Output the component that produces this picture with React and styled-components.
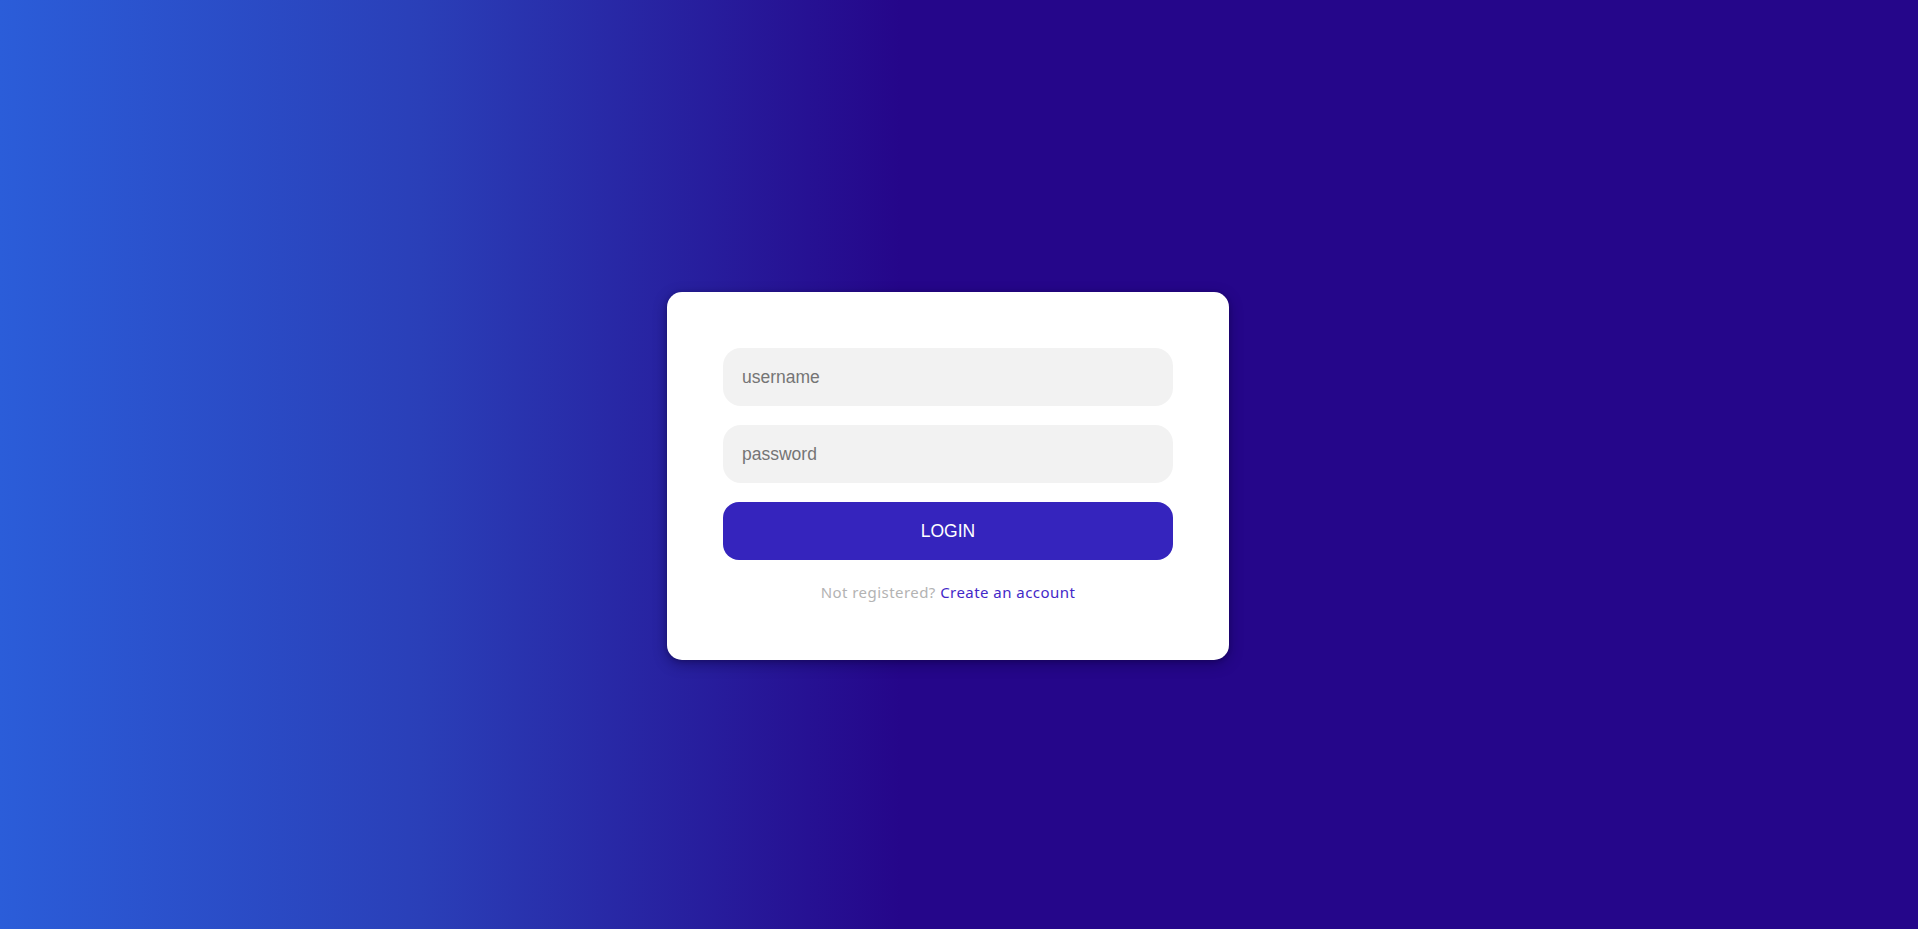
import React from "react";
import styled, { createGlobalStyle } from "styled-components";

const GlobalStyle = createGlobalStyle`
  html, body {
    margin: 0;
    padding: 0;
    height: 100%;
  }
  body {
    font-family: "Liberation Sans", Arial, sans-serif;
    background: linear-gradient(to right, #2b5dd9 0%, #2a3fb8 22%, #25068a 47%, #25068a 100%);
    min-height: 929px;
  }
  #root {
    min-height: 100%;
  }
`;

const Page = styled.main`
  display: flex;
  justify-content: center;
  align-items: flex-start;
  padding: 292px 22px 0 0;
  min-height: 929px;
  box-sizing: border-box;
`;

const Card = styled.form`
  width: 450px;
  padding: 56px 56px 56px;
  background: #ffffff;
  border-radius: 15px;
  box-shadow: 0 4px 14px rgba(10, 0, 60, 0.45), 0 1px 4px rgba(0, 0, 0, 0.2);
  display: flex;
  flex-direction: column;
  gap: 19px;
  text-align: center;
`;

const Field = styled.input`
  display: block;
  width: 100%;
  height: 58px;
  box-sizing: border-box;
  padding: 0 19px;
  border: 0;
  outline: 0;
  border-radius: 18px;
  background: #f2f2f2;
  font-family: "Liberation Sans", Arial, sans-serif;
  font-size: 17.5px;
  color: #333;

  &::placeholder {
    color: #757575;
    opacity: 1;
  }
`;

const Button = styled.button`
  width: 100%;
  height: 58px;
  border: 0;
  border-radius: 16px;
  background: #3524bd;
  color: #ffffff;
  font-family: "Liberation Sans", Arial, sans-serif;
  font-size: 17.5px;
  text-transform: uppercase;
  cursor: pointer;
`;

const Message = styled.p`
  margin: 0;
  padding-top: 1px;
  font-family: "Noto Sans", "Open Sans", sans-serif;
  font-size: 15px;
  letter-spacing: 0.45px;
  line-height: 24px;
  color: #b3b3b3;
`;

const Link = styled.a`
  color: #4328c8;
  text-decoration: none;
`;

export default function App() {
  return (
    <>
      <GlobalStyle />
      <Page>
        <Card onSubmit={(e) => e.preventDefault()}>
          <Field type="text" placeholder="username" />
          <Field type="password" placeholder="password" />
          <Button type="submit">login</Button>
          <Message>
            Not registered? <Link href="#">Create an account</Link>
          </Message>
        </Card>
      </Page>
    </>
  );
}
